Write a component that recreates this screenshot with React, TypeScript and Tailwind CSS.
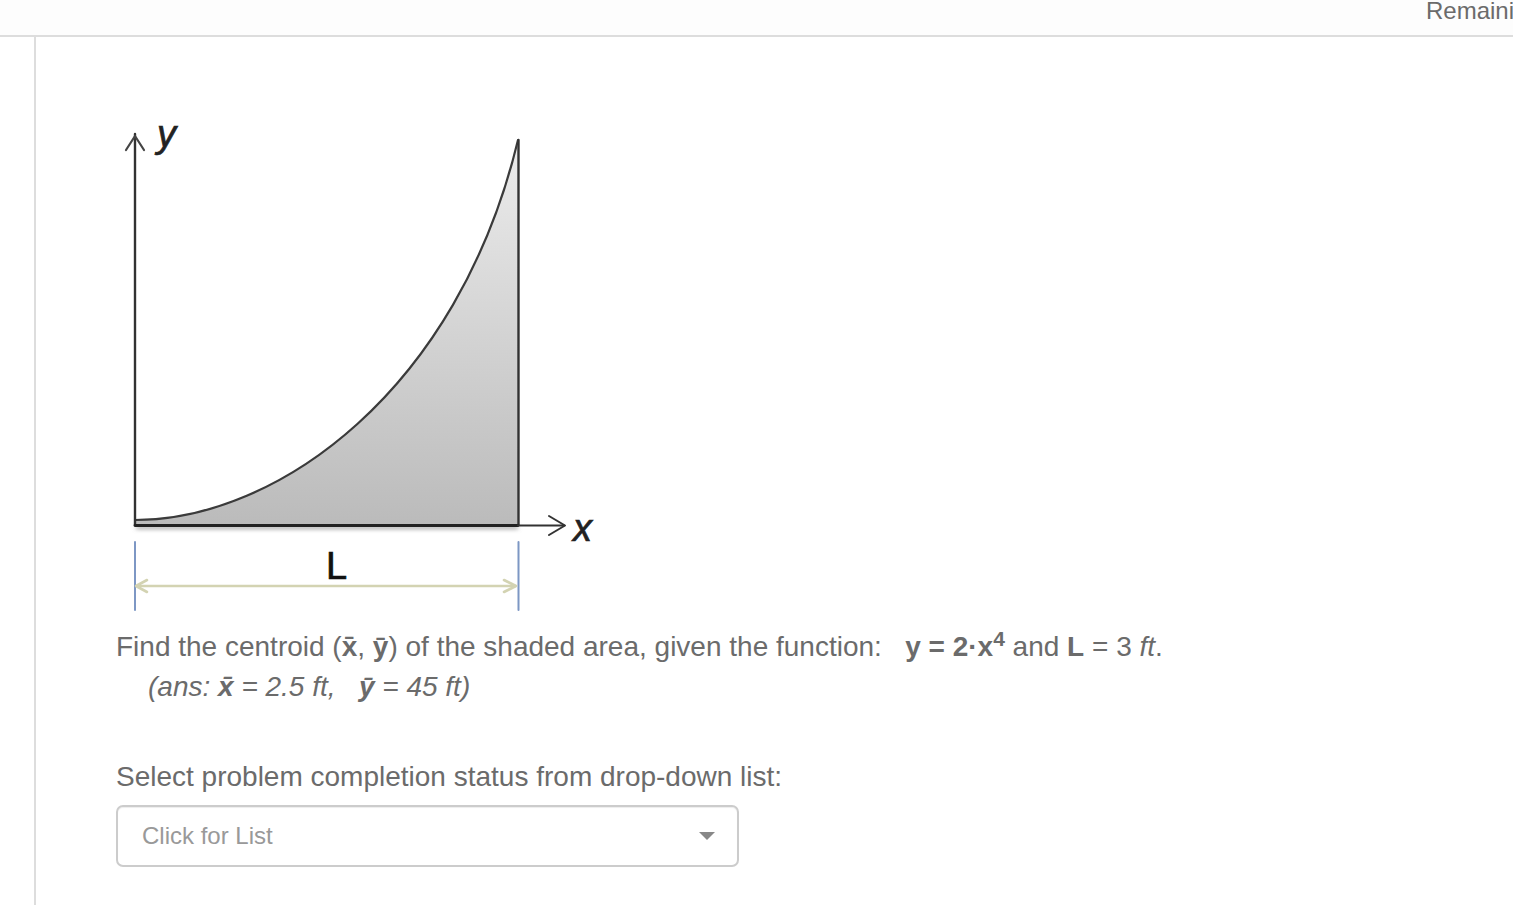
const curve = "M135 520 C 278 520 458 390 518 140";

export default function App() {
  return (
    <div className="w-[1513px] h-[922px] overflow-hidden bg-white text-[#6b6b6b] font-['Liberation_Sans',Arial,sans-serif]">
      <header className="h-[37px] border-b-2 border-[#dddddd] bg-[#fdfdfd] overflow-hidden pl-[1426px] whitespace-nowrap text-[24px] leading-[22px]">
        Remaining Time
      </header>
      <div className="flex h-[868px]">
        <div className="w-[36px] shrink-0 border-r-2 border-[#dddddd]" />
        <main className="pl-[80px] pt-[68px] flex flex-col items-start">
          <svg width="500" height="510" viewBox="116 105 500 510" className="block">
            <defs>
              <linearGradient id="fill" x1="0" y1="0" x2="0" y2="1">
                <stop offset="0" stopColor="#ececec" />
                <stop offset="1" stopColor="#bbbbbb" />
              </linearGradient>
              <filter id="soft" x="-5%" y="-5%" width="110%" height="110%">
                <feGaussianBlur stdDeviation="0.6" />
              </filter>
              <filter id="shadow" x="-5%" y="-200%" width="110%" height="500%">
                <feGaussianBlur stdDeviation="2" />
              </filter>
            </defs>
            <rect x="136" y="526" width="382" height="3" fill="#999" filter="url(#shadow)" />
            <g filter="url(#soft)" fill="none" strokeLinecap="round" strokeLinejoin="round">
              <path d={`${curve} L518 525 L135 525 Z`} fill="url(#fill)" stroke="none" />
              <path d={curve} stroke="#3a3a3a" strokeWidth="2.2" />
              <path d="M135 525 V134" stroke="#333" strokeWidth="2.4" />
              <path d="M126 150 L135 136 L144 150" stroke="#444" strokeWidth="2.2" />
              <path d="M518.5 140 V525" stroke="#333" strokeWidth="2.4" />
              <path d="M135 525.5 H518" stroke="#222" strokeWidth="2.8" />
              <path d="M518 525.5 H564" stroke="#333" strokeWidth="2" />
              <path d="M549 516 L565 525.5 L549 535" stroke="#333" strokeWidth="2" />
              <path d="M135 542 V610" stroke="#7d97c4" strokeWidth="2" />
              <path d="M518.5 542 V610" stroke="#7d97c4" strokeWidth="2" />
              <path d="M137 586 H515" stroke="#d3d3b2" strokeWidth="2.6" />
              <path d="M147 580 L136 586 L147 592" stroke="#d3d3b2" strokeWidth="2.6" />
              <path d="M504 580 L516 586 L504 592" stroke="#d3d3b2" strokeWidth="2.6" />
            </g>
            <text x="157" y="147" fontFamily="'Liberation Sans',sans-serif" fontStyle="italic" fontSize="38" fill="#222" stroke="#222" strokeWidth="0.7">y</text>
            <text x="573" y="541" fontFamily="'Liberation Sans',sans-serif" fontStyle="italic" fontSize="38" fill="#222" stroke="#222" strokeWidth="0.7">x</text>
            <text x="326" y="579" fontFamily="'Liberation Sans',sans-serif" fontSize="38" fill="#111" stroke="#111" strokeWidth="0.7">L</text>
          </svg>
          <p className="mt-[12px] text-[28px] leading-[40px] whitespace-pre">
            Find the centroid (<b>x̄</b>, <b>ȳ</b>) of the shaded area, given the function:   <b>y = 2·x<sup className="text-[21px] leading-none">4</sup></b> and <b>L</b> = 3 <i>ft</i>.
          </p>
          <p className="pl-[32px] text-[28px] leading-[40px] italic whitespace-pre">
            (ans: <b>x̄</b> = 2.5 ft,   <b>ȳ</b> = 45 ft)
          </p>
          <p className="mt-[50px] text-[28px] leading-[40px]">Select problem completion status from drop-down list:</p>
          <div className="mt-[8px] w-[623px] h-[62px] border-2 border-[#cccccc] rounded-[7px] shadow-[inset_0_1px_1px_rgba(0,0,0,0.075)] flex items-center justify-between pl-[24px] pr-[22px] text-[24px] text-[#999999]">
            <span>Click for List</span>
            <span className="w-0 h-0 border-x-[8px] border-x-transparent border-t-[8px] border-t-[#888888]" />
          </div>
        </main>
      </div>
    </div>
  );
}
